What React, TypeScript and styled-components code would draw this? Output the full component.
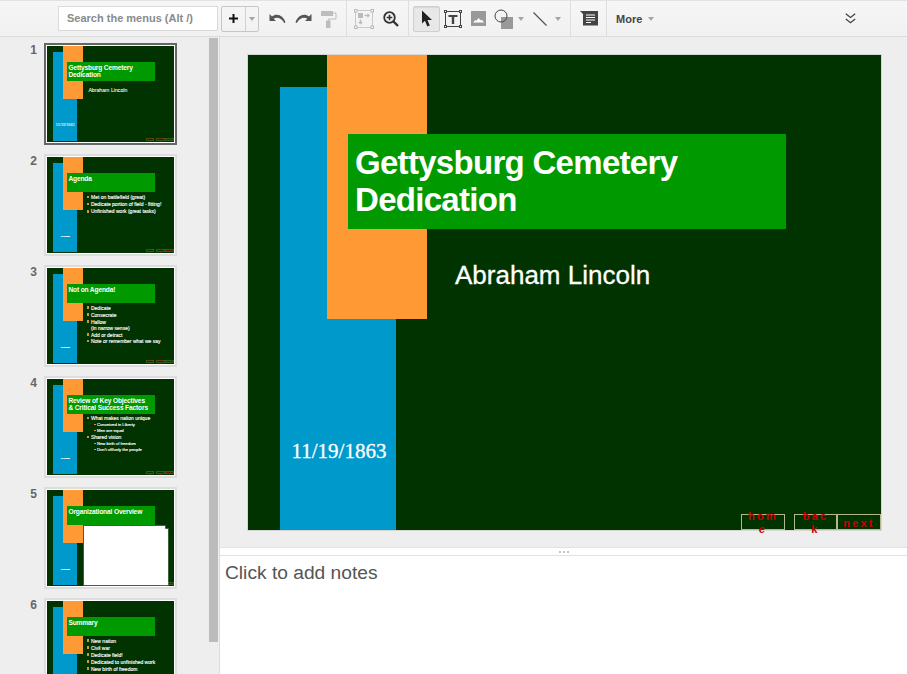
import React from 'react';
import styled, { createGlobalStyle } from 'styled-components';

const GlobalStyle = createGlobalStyle`
  html, body {
    margin: 0;
    padding: 0;
    height: 100%;
    overflow: hidden;
    background: #eee;
    font-family: "Liberation Sans", Arial, sans-serif;
  }
  #root {
    height: 100%;
  }
`;

const Page = styled.div`
  display: flex;
  flex-direction: column;
  width: 907px;
  height: 674px;
  overflow: hidden;
`;

const Toolbar = styled.div`
  display: flex;
  align-items: center;
  flex: none;
  box-sizing: border-box;
  height: 37px;
  padding-left: 58px;
  padding-right: 44px;
  background: linear-gradient(#f6f6f6, #f1f1f1);
  border-top: 1px solid #e2e2e2;
  border-bottom: 1px solid #dcdcdc;
`;

const SearchBox = styled.div`
  box-sizing: border-box;
  width: 160px;
  height: 25px;
  padding: 0 8px;
  background: #fff;
  border: 1px solid #d9d9d9;
  font-size: 11px;
  font-weight: bold;
  line-height: 23px;
  color: #8a8a8a;
`;

const SplitButton = styled.div`
  display: flex;
  box-sizing: border-box;
  width: 38px;
  height: 26px;
  margin-left: 3px;
  margin-right: 5px;
  border: 1px solid #c6c6c6;
  border-radius: 2px;
`;

const SplitMain = styled.div`
  display: flex;
  align-items: center;
  justify-content: center;
  width: 23px;
  border-right: 1px solid #d0d0d0;
`;

const SplitCaret = styled.div`
  display: flex;
  flex: 1;
  align-items: center;
  justify-content: center;
`;

const Slot = styled.div<{ $w: number; $active?: boolean }>`
  display: flex;
  flex: none;
  align-items: center;
  justify-content: center;
  box-sizing: border-box;
  width: ${(p) => p.$w}px;
  height: 26px;
  ${(p) =>
    p.$active &&
    `
    background: #e8e8e8;
    border: 1px solid #cfcfcf;
    border-radius: 2px;
    box-shadow: inset 0 1px 1px rgba(0, 0, 0, 0.08);
  `}
`;

const Separator = styled.div<{ $left: number; $right: number }>`
  flex: none;
  width: 1px;
  height: 36px;
  margin: 0 ${(p) => p.$right}px 0 ${(p) => p.$left}px;
  background: #dedede;
`;

const MoreLabel = styled.span`
  margin-left: 9px;
  margin-right: 6px;
  font-size: 11px;
  font-weight: bold;
  color: #444;
`;

const Spacer = styled.div`
  flex: 1;
`;

const Caret = styled.span`
  display: block;
  width: 0;
  height: 0;
  border-left: 3.5px solid transparent;
  border-right: 3.5px solid transparent;
  border-top: 4px solid #a5a5a5;
`;

const Body = styled.div`
  display: flex;
  flex: 1;
  min-height: 0;
`;

const Filmstrip = styled.div`
  display: flex;
  flex: none;
  box-sizing: border-box;
  width: 220px;
  border-right: 1px solid #dcdcdc;
  background: #eee;
`;

const ThumbList = styled.div`
  display: flex;
  flex: none;
  flex-direction: column;
  gap: 9px;
  box-sizing: border-box;
  width: 209px;
  padding-top: 6px;
  overflow: hidden;
`;

const ThumbRow = styled.div`
  display: flex;
  flex: none;
  align-items: flex-start;
`;

const ThumbNumber = styled.div`
  box-sizing: border-box;
  width: 37px;
  font-size: 12px;
  font-weight: bold;
  line-height: 14px;
  text-align: right;
  color: #666;
`;

const ThumbFrame = styled.div<{ $selected?: boolean }>`
  flex: none;
  box-sizing: border-box;
  width: 133px;
  height: 102px;
  margin-left: 7px;
  padding: 1px;
  background: #fff;
  border: 2px solid ${(p) => (p.$selected ? '#666' : '#ddd')};
`;

const ThumbClip = styled.div`
  width: 127px;
  height: 96px;
  overflow: hidden;
  background: #013300;
`;

const ScrollTrack = styled.div`
  flex: 1;
  padding-top: 1px;
`;

const ScrollThumb = styled.div`
  width: 9px;
  height: 604px;
  background: #bcbcbc;
`;

const Editor = styled.div`
  display: flex;
  flex: 1;
  flex-direction: column;
  min-width: 0;
`;

const Stage = styled.div`
  flex: none;
  box-sizing: border-box;
  height: 510px;
  padding: 18px 0 0 28px;
  background: #eee;
`;

const SlideBorder = styled.div`
  width: 633px;
  height: 475px;
  box-shadow: 0 0 0 1px #d6d6d6;
`;

const Splitter = styled.div`
  display: flex;
  flex: none;
  align-items: center;
  justify-content: center;
  gap: 2px;
  box-sizing: border-box;
  height: 9px;
  background: #fff;
  border-top: 1px solid #e2e2e2;
  border-bottom: 1px solid #e2e2e2;
`;

const SplitterDot = styled.span`
  width: 2px;
  height: 2px;
  background: #c4c4c4;
`;

const Notes = styled.div`
  flex: 1;
  padding: 6px 5px;
  background: #fff;
  font-size: 19.2px;
  line-height: 21px;
  color: #555;
`;

/* slide canvas, everything inside sits at its place on the slide */
const SlideCanvas = styled.div<{ $scale?: number }>`
  position: relative;
  width: 633px;
  height: 475px;
  background: #013300;
  zoom: ${(p) => p.$scale ?? 1};
`;

const BlueBar = styled.div`
  position: absolute;
  left: 32px;
  top: 32px;
  width: 116px;
  height: 443px;
  background: #0099cc;
`;

const OrangeBar = styled.div`
  position: absolute;
  left: 79px;
  top: 0;
  width: 100px;
  height: 264px;
  background: #ff9933;
`;

const TitleBox = styled.div`
  position: absolute;
  left: 100px;
  top: 79px;
  box-sizing: border-box;
  width: 438px;
  height: 95px;
  padding: 10px 7px;
  background: #009900;
  font-size: 33px;
  font-weight: bold;
  line-height: 37px;
  letter-spacing: -0.7px;
  color: #fff;
  white-space: pre;
`;

const Subtitle = styled.div`
  position: absolute;
  left: 207px;
  top: 204px;
  font-size: 26px;
  line-height: 32px;
  color: #fff;
  -webkit-text-stroke: 0.3px #fff;
`;

const DateText = styled.div<{ $small?: boolean }>`
  position: absolute;
  left: 33px;
  top: ${(p) => (p.$small ? 391 : 382)}px;
  width: 116px;
  font-family: "Liberation Serif", "Times New Roman", serif;
  font-size: ${(p) => (p.$small ? 10 : 21)}px;
  line-height: ${(p) => (p.$small ? 12 : 28)}px;
  text-align: center;
  color: #fff;
  -webkit-text-stroke: ${(p) => (p.$small ? 1 : 0.3)}px #fff;
`;

const Bullets = styled.div`
  position: absolute;
  left: 198px;
  top: 180px;
  color: #fff;
  -webkit-text-stroke: 0.7px #fff;
`;

const BulletRow = styled.div<{ $level: number; $height: number }>`
  display: flex;
  align-items: center;
  height: ${(p) => p.$height}px;
  padding-left: ${(p) => (p.$level === 2 ? 37 : 0)}px;
  font-size: ${(p) => (p.$level === 2 ? 21 : 25)}px;
  white-space: nowrap;
`;

const BulletMark = styled.span<{ $level: number; $none?: boolean }>`
  flex: none;
  width: 11px;
  height: ${(p) => (p.$level === 2 ? 5 : 11)}px;
  margin-right: ${(p) => (p.$level === 2 ? 4 : 11)}px;
  background: ${(p) => (p.$none ? 'transparent' : '#cc9933')};
`;

const OrgChart = styled.div`
  position: absolute;
  left: 185px;
  top: 180px;
  width: 405px;
  height: 295px;
  background: #fff;
  box-shadow: 0 0 0 4px rgba(255, 255, 255, 0.3);
`;

const OrgChartEdge = styled.div`
  position: absolute;
  left: 590px;
  top: 195px;
  width: 15px;
  height: 280px;
  background: #fff;
  box-shadow: 0 0 0 4px rgba(255, 255, 255, 0.3);
`;

const NavRow = styled.div`
  position: absolute;
  right: 0;
  bottom: 0;
  display: flex;
`;

const NavButton = styled.div<{ $w: number; $gap?: number; $thumb?: boolean }>`
  display: flex;
  align-items: center;
  justify-content: center;
  box-sizing: border-box;
  width: ${(p) => p.$w}px;
  height: 16px;
  margin-left: ${(p) => p.$gap ?? 0}px;
  padding-top: 2px;
  border: 1px solid ${(p) => (p.$thumb ? '#2f5a1c' : '#b3b98c')};
  font-size: 11px;
  font-weight: bold;
  line-height: 13px;
  letter-spacing: 2.2px;
  text-align: center;
  color: #cc0000;
  white-space: pre;
`;

type Line = { text: string; level?: number; height?: number; noMark?: boolean };

type SlideData = {
  title: string;
  subtitle?: string;
  lines?: Line[];
  rowHeight?: number;
  chart?: boolean;
  fullDate?: boolean;
};

const slides: SlideData[] = [
  { title: 'Gettysburg Cemetery\nDedication', subtitle: 'Abraham Lincoln', fullDate: true },
  {
    title: 'Agenda',
    rowHeight: 37,
    lines: [
      { text: 'Met on battlefield (great)' },
      { text: 'Dedicate portion of field - fitting!' },
      { text: 'Unfinished work (great tasks)' },
    ],
  },
  {
    title: 'Not on Agenda!',
    rowHeight: 35,
    lines: [
      { text: 'Dedicate' },
      { text: 'Consecrate' },
      { text: 'Hallow' },
      { text: '(in narrow sense)', noMark: true, height: 30 },
      { text: 'Add or detract' },
      { text: 'Note or remember what we say', height: 30 },
    ],
  },
  {
    title: 'Review of Key Objectives\n& Critical Success Factors',
    rowHeight: 33,
    lines: [
      { text: 'What makes nation unique' },
      { text: 'Conceived in Liberty', level: 2, height: 30 },
      { text: 'Men are equal', level: 2, height: 30 },
      { text: 'Shared vision', height: 35 },
      { text: 'New birth of freedom', level: 2, height: 30 },
      { text: "Don't off/only the people", level: 2, height: 30 },
    ],
  },
  { title: 'Organizational Overview', chart: true },
  {
    title: 'Summary',
    rowHeight: 35,
    lines: [
      { text: 'New nation' },
      { text: 'Civil war' },
      { text: 'Dedicate field!' },
      { text: 'Dedicated to unfinished work' },
      { text: 'New birth of freedom' },
      { text: 'Government of the people' },
    ],
  },
];

const Slide: React.FC<{ data: SlideData; scale?: number }> = ({ data, scale }) => (
  <SlideCanvas $scale={scale}>
    <BlueBar />
    <OrangeBar />
    <TitleBox>{data.title}</TitleBox>
    {data.subtitle && <Subtitle>{data.subtitle}</Subtitle>}
    <DateText $small={!data.fullDate}>11/19/1863</DateText>
    {data.lines && (
      <Bullets>
        {data.lines.map((line) => (
          <BulletRow key={line.text} $level={line.level ?? 1} $height={line.height ?? data.rowHeight ?? 35}>
            <BulletMark $level={line.level ?? 1} $none={line.noMark} />
            {line.text}
          </BulletRow>
        ))}
      </Bullets>
    )}
    <NavRow>
      <NavButton $w={44} $thumb={!!scale}>
        {'hom\ne'}
      </NavButton>
      <NavButton $w={43} $gap={9} $thumb={!!scale}>
        {'bac\nk'}
      </NavButton>
      <NavButton $w={44} $thumb={!!scale}>
        next
      </NavButton>
    </NavRow>
    {data.chart && (
      <>
        <OrgChart />
        <OrgChartEdge />
      </>
    )}
  </SlideCanvas>
);

const UndoSvg = styled.svg<{ $flip?: boolean }>`
  transform: ${(p) => (p.$flip ? 'scaleX(-1)' : 'none')};
`;

const UndoIcon = ({ flip }: { flip?: boolean }) => (
  <UndoSvg $flip={flip} width="17" height="12" viewBox="0 0 17 12">
    <path d="M0.5 1 L0.5 8 L7 8 L4.6 5.8 C7.5 3.8 12 4.2 15.2 10 L16.5 9.5 C14.5 2.5 8 -0.5 3 3.4 Z" fill="#555" />
  </UndoSvg>
);

const RollerIcon = () => (
  <svg width="16" height="18" viewBox="0 0 16 18">
    <rect x="0" y="1" width="12" height="5" fill="#bdbdbd" />
    <path d="M12 3 H15 V9 H7.5 V11" fill="none" stroke="#bdbdbd" />
    <rect x="5" y="10.5" width="4.5" height="7.5" fill="#bdbdbd" />
  </svg>
);

const LayoutIcon = () => (
  <svg width="20" height="20" viewBox="0 0 20 20">
    <rect x="1.5" y="1.5" width="17" height="17" fill="none" stroke="#c8c8c8" />
    <g fill="#fff" stroke="#b8b8b8">
      <rect x="0.5" y="0.5" width="2.5" height="2.5" />
      <rect x="17" y="0.5" width="2.5" height="2.5" />
      <rect x="0.5" y="17" width="2.5" height="2.5" />
      <rect x="17" y="17" width="2.5" height="2.5" />
    </g>
    <g fill="#bbb">
      <rect x="4" y="4" width="5" height="5" />
      <path d="M10.5 5.7 H13.5 V4 L16 6.5 L13.5 9 V7.3 H10.5 Z" />
      <path d="M5.7 10.5 V13 H4 L6.5 15.5 L9 13 H7.3 V10.5 Z" />
    </g>
  </svg>
);

const ZoomIcon = () => (
  <svg width="16" height="16" viewBox="0 0 16 16">
    <circle cx="6.5" cy="6.5" r="5.3" fill="none" stroke="#333" strokeWidth="1.8" />
    <path d="M6.5 3.7 V9.3 M3.7 6.5 H9.3" stroke="#333" strokeWidth="1.6" />
    <path d="M10.5 10.5 L15 15" stroke="#333" strokeWidth="2.4" />
  </svg>
);

const PointerIcon = () => (
  <svg width="12" height="17" viewBox="0 0 12 17">
    <path d="M1 0.5 V13.5 L4 10.8 L6.3 16.5 L8.8 15.4 L6.5 10 H11 Z" fill="#222" />
  </svg>
);

const TextBoxIcon = () => (
  <svg width="18" height="18" viewBox="0 0 18 18">
    <rect x="1.5" y="1.5" width="15" height="15" fill="none" stroke="#444" />
    <g fill="#fff" stroke="#444">
      <rect x="0.5" y="0.5" width="2" height="2" />
      <rect x="15.5" y="0.5" width="2" height="2" />
      <rect x="0.5" y="15.5" width="2" height="2" />
      <rect x="15.5" y="15.5" width="2" height="2" />
    </g>
    <path d="M4.5 5 H13.5 V7 H10.2 V14 H7.8 V7 H4.5 Z" fill="#444" />
  </svg>
);

const ImageIcon = () => (
  <svg width="15" height="15" viewBox="0 0 15 15">
    <rect width="15" height="15" fill="#999" />
    <path d="M2 11.5 L4.5 9 L5.5 9.8 L7.5 7 L10 9.5 L11 8.8 L13 11.5 Z" fill="#fff" />
  </svg>
);

const ShapeIcon = () => (
  <svg width="20" height="20" viewBox="0 0 20 20">
    <rect x="7" y="8" width="12" height="12" fill="#999" />
    <circle cx="7" cy="7" r="6" fill="none" stroke="#444" />
  </svg>
);

const LineIcon = () => (
  <svg width="14" height="14" viewBox="0 0 14 14">
    <path d="M0.5 0.5 L13.5 13.5" stroke="#555" strokeWidth="1.2" />
  </svg>
);

const CommentIcon = () => (
  <svg width="18" height="15" viewBox="0 0 18 15">
    <path d="M0 0 H18 V14.5 H3 V3 Z" fill="#444" />
    <path d="M6 4 H15 M6 6.5 H15 M6 9 H15 M6 11.5 H11" stroke="#fff" />
  </svg>
);

const CollapseIcon = () => (
  <svg width="11" height="11" viewBox="0 0 11 11">
    <path d="M0.8 0.8 L5.5 4.5 L10.2 0.8 M0.8 6 L5.5 9.7 L10.2 6" fill="none" stroke="#444" strokeWidth="1.3" />
  </svg>
);

const PlusIcon = () => (
  <svg width="9" height="9" viewBox="0 0 9 9">
    <path d="M4.5 0 V9 M0 4.5 H9" stroke="#111" strokeWidth="2" />
  </svg>
);

export default function App() {
  return (
    <Page>
      <GlobalStyle />
      <Toolbar>
        <SearchBox>Search the menus (Alt /)</SearchBox>
        <SplitButton>
          <SplitMain>
            <PlusIcon />
          </SplitMain>
          <SplitCaret>
            <Caret />
          </SplitCaret>
        </SplitButton>
        <Slot $w={26}>
          <UndoIcon />
        </Slot>
        <Slot $w={26}>
          <UndoIcon flip />
        </Slot>
        <Slot $w={26}>
          <RollerIcon />
        </Slot>
        <Separator $left={4} $right={3} />
        <Slot $w={27}>
          <LayoutIcon />
        </Slot>
        <Slot $w={27}>
          <ZoomIcon />
        </Slot>
        <Separator $left={4} $right={4} />
        <Slot $w={27} $active>
          <PointerIcon />
        </Slot>
        <Slot $w={25}>
          <TextBoxIcon />
        </Slot>
        <Slot $w={26}>
          <ImageIcon />
        </Slot>
        <Slot $w={25}>
          <ShapeIcon />
        </Slot>
        <Slot $w={10}>
          <Caret />
        </Slot>
        <Slot $w={27}>
          <LineIcon />
        </Slot>
        <Slot $w={10}>
          <Caret />
        </Slot>
        <Separator $left={7} $right={5} />
        <Slot $w={26}>
          <CommentIcon />
        </Slot>
        <Separator $left={4} $right={0} />
        <MoreLabel>More</MoreLabel>
        <Caret />
        <Spacer />
        <Slot $w={26}>
          <CollapseIcon />
        </Slot>
      </Toolbar>
      <Body>
        <Filmstrip>
          <ThumbList>
            {slides.map((slide, i) => (
              <ThumbRow key={slide.title}>
                <ThumbNumber>{i + 1}</ThumbNumber>
                <ThumbFrame $selected={i === 0}>
                  <ThumbClip>
                    <Slide data={slide} scale={0.2} />
                  </ThumbClip>
                </ThumbFrame>
              </ThumbRow>
            ))}
          </ThumbList>
          <ScrollTrack>
            <ScrollThumb />
          </ScrollTrack>
        </Filmstrip>
        <Editor>
          <Stage>
            <SlideBorder>
              <Slide data={slides[0]} />
            </SlideBorder>
          </Stage>
          <Splitter>
            <SplitterDot />
            <SplitterDot />
            <SplitterDot />
          </Splitter>
          <Notes>Click to add notes</Notes>
        </Editor>
      </Body>
    </Page>
  );
}
